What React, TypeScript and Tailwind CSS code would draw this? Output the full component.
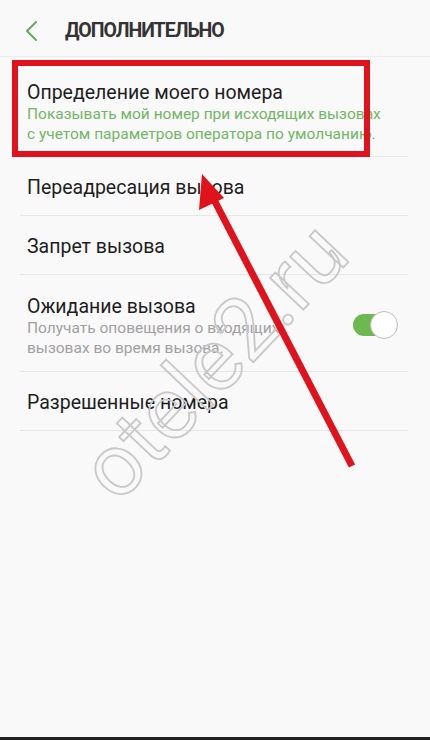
import React from "react";

const font = { fontFamily: "Roboto, 'Noto Sans', sans-serif" };

type Item = { title: string; sub?: string[]; subGreen?: boolean; toggle?: boolean };

const items: Item[] = [
    {
        title: "Определение моего номера",
        sub: ["Показывать мой номер при исходящих вызовах", "с учетом параметров оператора по умолчанию."],
        subGreen: true,
    },
    { title: "Переадресация вызова" },
    { title: "Запрет вызова" },
    { title: "Ожидание вызова", sub: ["Получать оповещения о входящих", "вызовах во время вызова."], toggle: true },
    { title: "Разрешенные номера" },
];

const Toggle: React.FC = () => (
    <div className="relative w-[45px] h-[28px] shrink-0">
        <div className="absolute left-0 top-[3px] w-[40px] h-[22px] rounded-full bg-[#6cb94f]" />
        <div className="absolute right-0 top-0 w-[28px] h-[28px] rounded-full bg-white border border-[#bdbdbd]" />
    </div>
);

export default function App() {
    return (
        <div className="relative w-[430px] h-[740px] bg-[#f9f9f9] overflow-hidden flex flex-col" style={font}>
            {/* Header */}
            <div className="h-[57px] flex items-center pt-[5px] border-b border-[#ececec] shrink-0">
                <svg className="ml-[24px]" width="14" height="22" viewBox="0 0 14 22" fill="none">
                    <path d="M12 2 L3 11 L12 20" stroke="#6aa862" strokeWidth="2" strokeLinecap="round" strokeLinejoin="round" />
                </svg>
                <h1 className="ml-[27px] text-[19.5px] font-bold text-[#333] tracking-[-1px]">ДОПОЛНИТЕЛЬНО</h1>
            </div>

            {/* Settings list */}
            <div className="pl-[20px] pr-[22px]">
                {items.map((it, i) => (
                    <div
                        key={i}
                        className={`flex items-center border-b border-[#e6e6e6] pl-[7px] ${
                            i === 0 ? "h-[100px] pt-[13px]" : it.sub ? "h-[97px] pt-[8px]" : "h-[59px] pt-[4px]"
                        }`}
                    >
                        <div className="flex-1 min-w-0">
                            <div className="text-[19.5px] leading-[22px] text-[#1e1e1e]">{it.title}</div>
                            {it.sub && (
                                <div
                                    className={`mt-[1px] text-[15.5px] leading-[19.5px] whitespace-nowrap ${
                                        it.subGreen ? "text-[#72b665]" : "text-[#a0a0a0]"
                                    }`}
                                >
                                    {it.sub.map((line, j) => (
                                        <div key={j}>{line}</div>
                                    ))}
                                </div>
                            )}
                        </div>
                        {it.toggle && (
                            <div className="pr-[10px] -mt-[4px]">
                                <Toggle />
                            </div>
                        )}
                    </div>
                ))}
            </div>

            <div className="flex-1" />
            <div className="h-[3px] bg-[#222] shrink-0" />

            {/* Watermark */}
            <svg className="absolute inset-0 pointer-events-none" width="430" height="740">
                <text
                    x="0"
                    y="0"
                    transform="translate(118 505) rotate(-46.5)"
                    fontFamily="Roboto, sans-serif"
                    fontSize="87"
                    fill="none"
                    stroke="#c8c8c8"
                    strokeWidth="1.8"
                >
                    otele2.ru
                </text>
            </svg>

            {/* Red annotation box */}
            <div className="absolute left-[12px] top-[60px] w-[358px] h-[97px] border-[6px] border-[#e0121b]" />

            {/* Red arrow */}
            <svg className="absolute inset-0 pointer-events-none" width="430" height="740">
                <line x1="352" y1="466" x2="210" y2="192" stroke="#e0121b" strokeWidth="7" />
                <polygon points="202,174 224,198 199,210" fill="#e0121b" />
            </svg>
        </div>
    );
}
